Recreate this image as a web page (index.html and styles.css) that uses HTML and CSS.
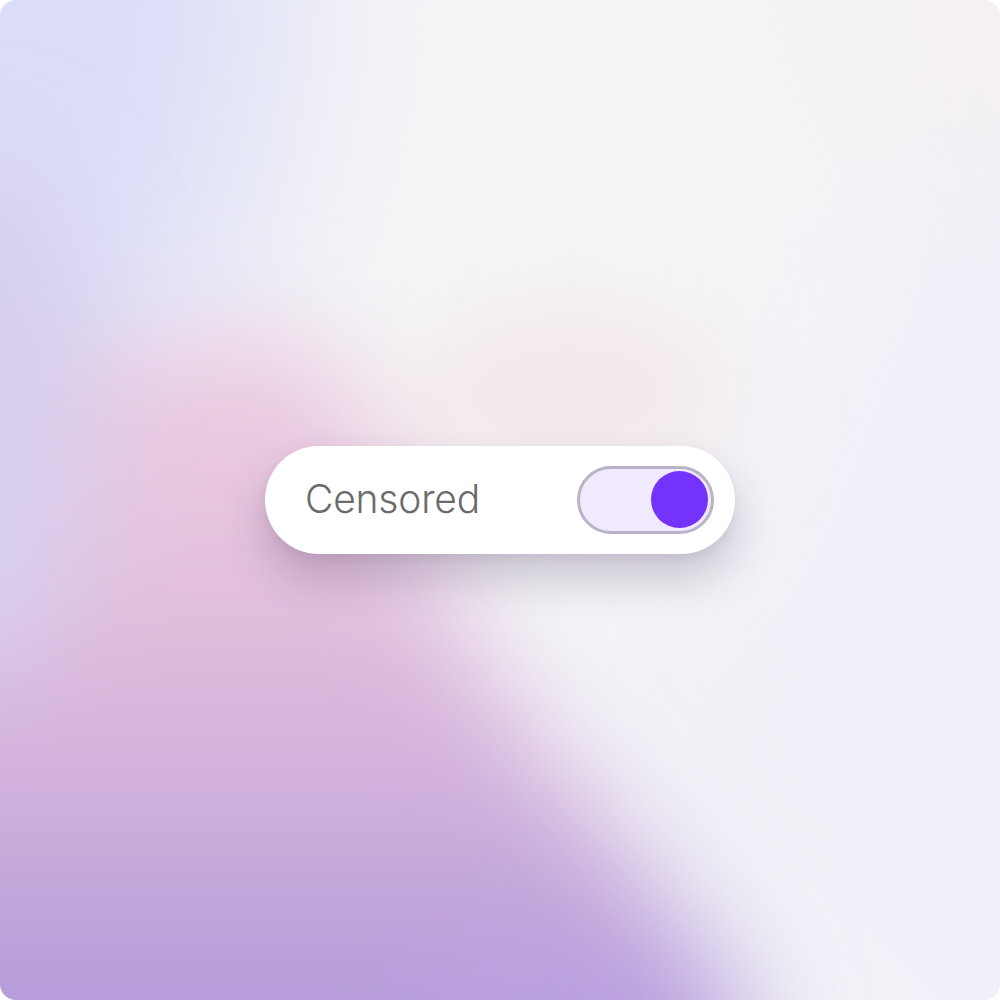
FILE: index.html
```html
<!DOCTYPE html>
<html>
<head>
<meta charset="utf-8">
<link rel="stylesheet" href="styles.css">
</head>
<body>
<div class="canvas">
  <svg class="backdrop" width="1000" height="1000" viewBox="0 0 1000 1000" aria-hidden="true">
    <defs>
      <filter id="soft" x="-50%" y="-50%" width="200%" height="200%">
        <feGaussianBlur stdDeviation="55"/>
      </filter>
      <filter id="softer" x="-50%" y="-50%" width="200%" height="200%">
        <feGaussianBlur stdDeviation="100"/>
      </filter>
      <linearGradient id="blobfill" gradientUnits="userSpaceOnUse" x1="0" y1="330" x2="0" y2="1000">
        <stop offset="0" stop-color="#edcde0"/>
        <stop offset="0.35" stop-color="#e4c2de"/>
        <stop offset="0.65" stop-color="#d4b2dc"/>
        <stop offset="1" stop-color="#b39bd9"/>
      </linearGradient>
    </defs>
    <rect x="0" y="0" width="1000" height="1000" fill="#f5f5f7"/>
    <g filter="url(#softer)">
      <ellipse cx="-120" cy="-60" rx="400" ry="600" fill="#dadcf8"/>
      <ellipse cx="1060" cy="650" rx="300" ry="500" fill="#efeff9"/>
      <ellipse cx="760" cy="760" rx="200" ry="160" fill="#f1eff7"/>
      <ellipse cx="1000" cy="0" rx="250" ry="200" fill="#f4f0f3"/>
    </g>
    <g filter="url(#soft)">
      <ellipse cx="570" cy="390" rx="160" ry="80" fill="#f3e6e9"/>
      <polygon points="-200,420 80,360 290,330 370,410 415,540 500,690 630,860 730,980 770,1200 -200,1200" fill="url(#blobfill)"/>
      <ellipse cx="-40" cy="420" rx="140" ry="260" fill="#d8cfee"/>
      <ellipse cx="580" cy="1010" rx="170" ry="60" fill="#b9a1e0"/>
    </g>
  </svg>
  <div class="card">
    <span class="label">Censored</span>
    <div class="switch"><div class="knob"></div></div>
  </div>
</div>
</body>
</html>
```
FILE: styles.css
```css
html, body { margin: 0; padding: 0; background: #ffffff; }
.canvas {
  width: 1000px; height: 1000px;
  border-radius: 16px;
  overflow: hidden;
  display: grid;
  place-items: center;
}
.backdrop {
  grid-area: 1 / 1;
  display: block;
  width: 1000px; height: 1000px;
}
.card {
  grid-area: 1 / 1;
  width: 470px; height: 108px;
  box-sizing: border-box;
  margin-top: -1px;
  background: #ffffff;
  border-radius: 54px;
  display: flex; align-items: center; justify-content: space-between;
  padding: 0 21px 0 40px;
  box-shadow: 0 24px 44px rgba(60,40,80,0.24), 0 4px 10px rgba(60,40,80,0.06);
}
.label {
  font-family: "Inter", "Liberation Sans", sans-serif;
  font-weight: 300;
  font-size: 39px;
  color: #6b6b6b;
  letter-spacing: -0.2px;
  margin-top: -2px;
}
.switch {
  width: 137px; height: 68px;
  box-sizing: border-box;
  border: 3px solid #b8b4c6;
  border-radius: 34px;
  background: #f1e9fe;
  display: flex; align-items: center; justify-content: flex-end;
  padding-right: 3px;
}
.knob {
  width: 57px; height: 57px;
  border-radius: 50%;
  background: #7433fb;
}
```
